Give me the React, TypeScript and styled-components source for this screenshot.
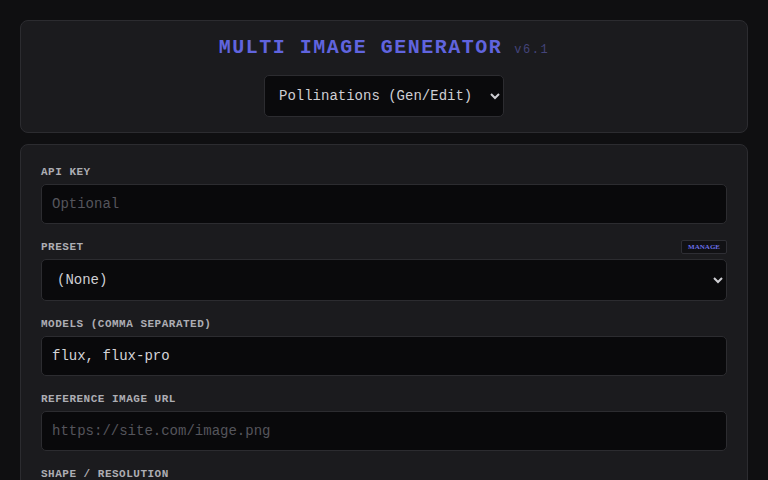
import styled, { createGlobalStyle } from "styled-components";

const mono = `"Courier New", Courier, "Liberation Mono", monospace`;

const GlobalStyle = createGlobalStyle`
  html, body {
    margin: 0;
    padding: 0;
    background: #0f0f11;
    color: #d4d4d8;
    font-family: ${mono};
  }
  * { box-sizing: border-box; }
`;

const Page = styled.div`
  padding: 20px;
  display: flex;
  flex-direction: column;
  gap: 11px;
`;

const Card = styled.div<{ $center?: boolean }>`
  background: #1b1b1e;
  border: 1px solid #2c2c30;
  border-radius: 8px;
  padding: ${(p) => (p.$center ? "15px 20px 15px" : "19px 20px")};
  display: flex;
  flex-direction: column;
  align-items: ${(p) => (p.$center ? "center" : "stretch")};
`;

const Title = styled.h1`
  margin: 0 0 15px;
  font-size: 20px;
  line-height: 24px;
  height: 24px;
  font-weight: bold;
  letter-spacing: 1.5px;
  color: #6064de;
  display: flex;
  align-items: baseline;
  gap: 12px;
`;

const Version = styled.span`
  font-size: 12px;
  font-weight: normal;
  letter-spacing: 1.5px;
  color: #44447a;
`;

const Select = styled.select<{ $wide?: boolean }>`
  color-scheme: dark;
  width: ${(p) => (p.$wide ? "100%" : "240px")};
  height: 42px;
  padding: 0 ${(p) => (p.$wide ? "11px" : "10px")};
  background: #0a0a0c;
  color: #cfcfd4;
  border: 1px solid #2c2c30;
  border-radius: 5px;
  font-family: ${mono};
  font-size: 14px;
  outline: none;
`;

const Field = styled.div`
  display: flex;
  flex-direction: column;
  gap: 5px;
  margin-bottom: 15px;
`;

const LabelRow = styled.div`
  display: flex;
  justify-content: space-between;
  align-items: flex-end;
  height: 15px;
`;

const Label = styled.label`
  font-size: 11px;
  line-height: 13px;
  font-weight: bold;
  letter-spacing: 0.5px;
  color: #adadb3;
  text-transform: uppercase;
`;

const SmallButton = styled.button`
  align-self: center;
  font-family: "Liberation Serif", serif;
  font-size: 7px;
  font-weight: bold;
  color: #6a6ee8;
  background: #111114;
  border: 1px solid #2e2e34;
  border-radius: 2px;
  padding: 0 6px;
  height: 14px;
  line-height: 12px;
`;

const Input = styled.input`
  width: 100%;
  height: 40px;
  padding: 0 10px;
  background: #09090b;
  color: #d4d4d8;
  border: 1px solid #2c2c30;
  border-radius: 5px;
  font-family: ${mono};
  font-size: 14px;
  outline: none;
  &::placeholder {
    color: #55555c;
  }
`;

export default function App() {
  return (
    <>
      <GlobalStyle />
      <Page>
        <Card $center>
          <Title>
            MULTI IMAGE GENERATOR <Version>v6.1</Version>
          </Title>
          <Select defaultValue="pollinations">
            <option value="pollinations">Pollinations (Gen/Edit)</option>
            <option value="other">Other</option>
          </Select>
        </Card>
        <Card>
          <Field>
            <LabelRow>
              <Label>API Key</Label>
            </LabelRow>
            <Input placeholder="Optional" />
          </Field>
          <Field>
            <LabelRow>
              <Label>Preset</Label>
              <SmallButton>MANAGE</SmallButton>
            </LabelRow>
            <Select $wide defaultValue="">
              <option value="">(None)</option>
            </Select>
          </Field>
          <Field>
            <LabelRow>
              <Label>Models (comma separated)</Label>
            </LabelRow>
            <Input defaultValue="flux, flux-pro" />
          </Field>
          <Field>
            <LabelRow>
              <Label>Reference Image URL</Label>
            </LabelRow>
            <Input placeholder="https://site.com/image.png" />
          </Field>
          <Field>
            <LabelRow>
              <Label>Shape / Resolution</Label>
            </LabelRow>
            <Select $wide defaultValue="square">
              <option value="square">Square (1024x1024)</option>
            </Select>
          </Field>
        </Card>
      </Page>
    </>
  );
}
